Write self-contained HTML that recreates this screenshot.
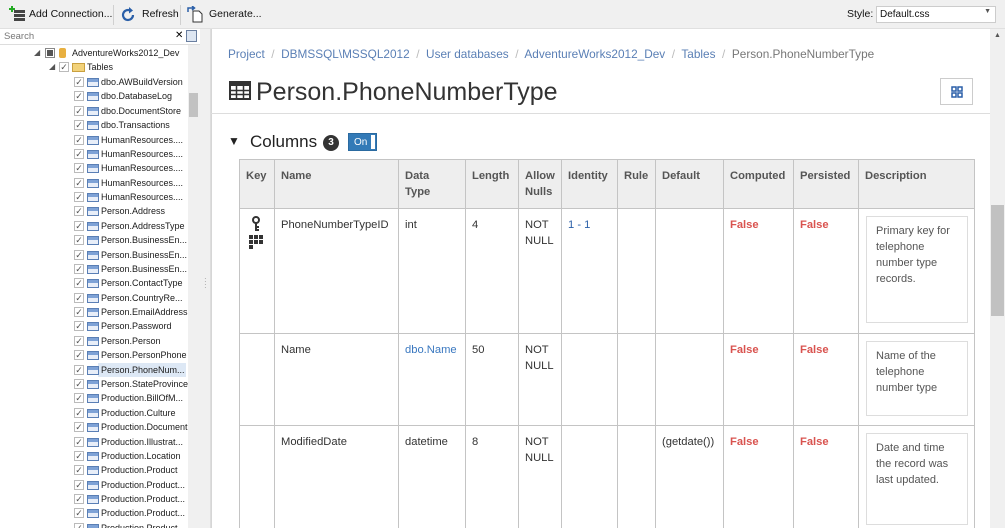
<!DOCTYPE html>
<html><head><meta charset="utf-8"><style>
*{box-sizing:border-box;margin:0;padding:0}
html,body{width:1005px;height:528px;overflow:hidden}
#w{width:1005px;height:528px;overflow:hidden;background:#f0f0f0;font-family:"Liberation Sans",sans-serif;position:relative}
.tb{position:absolute;left:0;top:0;width:1005px;height:29px;background:#f0f0f0;border-bottom:1px solid #e0e0e0;font-size:10.5px;color:#111}
.tb span{position:absolute;top:8px}
.sep{position:absolute;top:5px;width:1px;height:20px;background:#d0d0d0}
.side{position:absolute;left:0;top:29px;width:200px;height:499px;background:#fff;border-right:1px solid #ccc}
.search{position:absolute;left:0;top:29px;width:200px;height:16px;background:#fff;border-bottom:1px solid #ddd;font-size:9.5px;color:#777;padding:2px 4px}
.item{position:absolute;font-size:9px;color:#1a1a1a;height:14px;line-height:14px;white-space:nowrap}
.cb{position:absolute;width:10px;height:10px;border:1px solid #bbb;background:#fff;font-size:9px;line-height:8px;text-align:center;color:#555}
.ti{position:absolute;width:12px;height:9px;border:1px solid #5a7fb5;background:linear-gradient(#7ea2d6 0 3px,#e8eef8 3px);}
.content{position:absolute;left:211px;top:29px;width:779px;height:499px;background:#fff;border-left:1px solid #d6d6d6}
.vs{position:absolute;left:990px;top:29px;width:15px;height:499px;background:#f0f0f0}
table{position:absolute;left:239px;top:159px;border-collapse:collapse;table-layout:fixed;font-size:11.2px;color:#333}
td,th{border:1px solid #c4c4c4;vertical-align:top;text-align:left;padding:8px 6px;line-height:16px}
th{background:#eee;font-weight:bold;color:#555;padding-top:8px}
.f{color:#d9534f;font-weight:bold}
.ta{border:1px solid #ddd;width:102px;padding:6px 9px;color:#555;font-size:11px;line-height:16px;position:relative;margin-left:1px}
</style></head><body><div id="w">
<div class="tb">
<svg style="position:absolute;left:9px;top:6px" width="17" height="17"><rect x="5" y="4" width="11" height="3" fill="#444"/><rect x="5" y="8" width="11" height="3" fill="#444"/><rect x="5" y="12" width="11" height="3" fill="#444"/><path d="M3 0v6M0 3h6" stroke="#2a2" stroke-width="2"/></svg>
<span style="left:29px">Add Connection...</span>
<div class="sep" style="left:113px"></div>
<svg style="position:absolute;left:121px;top:7px" width="15" height="15"><path d="M12 8a5 5 0 1 1-3-4.6" fill="none" stroke="#2a5fa8" stroke-width="2.2"/><path d="M8 0l4 3.5-4 3z" fill="#2a5fa8"/></svg>
<span style="left:142px">Refresh</span>
<div class="sep" style="left:180px"></div>
<svg style="position:absolute;left:187px;top:6px" width="16" height="17"><path d="M6 5h6l3 3v8H6z" fill="#fff" stroke="#333"/><path d="M1 6V2h6M5 0l2.5 2L5 4" fill="none" stroke="#2a5fa8" stroke-width="1.5"/></svg>
<span style="left:209px">Generate...</span>
<span style="left:847px">Style:</span>
<div style="position:absolute;left:876px;top:6px;width:120px;height:17px;background:#fff;border:1px solid #ccc;font-size:10px;padding:2px 3px">Default.css<span style="position:absolute;right:4px;top:1px;font-size:7px;color:#555">▼</span></div>
</div>
<div class="side"></div>
<div class="search">Search<span style="position:absolute;left:175px;color:#000;font-size:10px;top:1px">✕</span><span style="position:absolute;left:186px;top:1px;width:11px;height:12px;border:1px solid #6a7fa0;background:#dde6f2"></span></div>
<div style="position:absolute;left:188px;top:45px;width:12px;height:483px;background:#f0f0f0"></div>
<div style="position:absolute;left:189px;top:93px;width:9px;height:24px;background:#c2c2c2"></div>
<div style="position:absolute;left:200px;top:29px;width:11px;height:499px;background:#f0f0f0;border-right:1px solid #ddd"></div>
<div style="position:absolute;left:204px;top:277px;color:#999;font-size:8px;line-height:3px">·<br>·<br>·<br>·</div>
<div class="item" style="left:34px;top:46px;font-size:8px;color:#555">◢</div>
<div class="cb" style="left:45px;top:48px;border-color:#888"><div style="width:6px;height:6px;background:#555;margin:1px"></div></div>
<div style="position:absolute;left:59px;top:48px;width:7px;height:10px;background:#e8b040;border-radius:2px"></div>
<div class="item" style="left:72px;top:46px">AdventureWorks2012_Dev</div>
<div class="item" style="left:49px;top:60px;font-size:8px;color:#555">◢</div>
<div class="cb" style="left:59px;top:62px">✓</div>
<div style="position:absolute;left:72px;top:63px;width:13px;height:9px;background:#f2d27a;border:1px solid #c9a040"></div>
<div class="item" style="left:87px;top:60px">Tables</div>
<div style="position:absolute;left:98px;top:363px;width:88px;height:14px;background:#dde8f5"></div>
<div id="tree"></div>
<script>
var n=["dbo.AWBuildVersion","dbo.DatabaseLog","dbo.DocumentStore","dbo.Transactions","HumanResources....","HumanResources....","HumanResources....","HumanResources....","HumanResources....","Person.Address","Person.AddressType","Person.BusinessEn...","Person.BusinessEn...","Person.BusinessEn...","Person.ContactType","Person.CountryRe...","Person.EmailAddress","Person.Password","Person.Person","Person.PersonPhone","Person.PhoneNum...","Person.StateProvince","Production.BillOfM...","Production.Culture","Production.Document","Production.Illustrat...","Production.Location","Production.Product","Production.Product...","Production.Product...","Production.Product...","Production.Product..."];
var h="";for(var i=0;i<n.length;i++){var y=75+i*14.38;h+='<div class="cb" style="left:74px;top:'+(y+2)+'px">✓</div><div class="ti" style="left:87px;top:'+(y+3)+'px"></div><div class="item" style="left:101px;top:'+y+'px">'+n[i]+'</div>';}
document.getElementById("tree").innerHTML=h;
</script>
<div class="content"></div>
<div class="vs"><div style="position:absolute;left:4px;top:3px;font-size:7px;color:#555">▲</div><div style="position:absolute;left:1px;top:176px;width:13px;height:111px;background:#c1c1c1"></div></div>
<div style="position:absolute;left:211px;top:113px;width:779px;height:1px;background:#ddd"></div>
<div style="position:absolute;left:228px;top:47px;font-size:11.8px;color:#5a7fb5;white-space:nowrap">Project <span style="color:#bbb">&nbsp;/&nbsp;</span> DBMSSQL\MSSQL2012 <span style="color:#bbb">&nbsp;/&nbsp;</span> User databases <span style="color:#bbb">&nbsp;/&nbsp;</span> AdventureWorks2012_Dev <span style="color:#bbb">&nbsp;/&nbsp;</span> Tables <span style="color:#bbb">&nbsp;/&nbsp;</span> <span style="color:#777">Person.PhoneNumberType</span></div>
<svg style="position:absolute;left:229px;top:81px" width="22" height="19"><rect x="1" y="1" width="20" height="17" fill="none" stroke="#333" stroke-width="2"/><rect x="1" y="1" width="20" height="4" fill="#333"/><path d="M7.5 5v13M14.5 5v13M1 9.5h20M1 13.5h20" stroke="#333" stroke-width="1.5"/></svg>
<div style="position:absolute;left:256px;top:78px;font-size:25px;color:#333">Person.PhoneNumberType</div>
<div style="position:absolute;left:940px;top:78px;width:33px;height:27px;border:1px solid #ccc;background:#fff"><svg style="position:absolute;left:10px;top:7px" width="12" height="12"><rect x="1" y="1" width="4" height="4" fill="none" stroke="#2a5fa8" stroke-width="1.5"/><rect x="7" y="1" width="4" height="4" fill="none" stroke="#2a5fa8" stroke-width="1.5"/><rect x="1" y="7" width="4" height="4" fill="none" stroke="#2a5fa8" stroke-width="1.5"/><rect x="7" y="7" width="4" height="4" fill="none" stroke="#2a5fa8" stroke-width="1.5"/></svg></div>
<div style="position:absolute;left:228px;top:134px;font-size:12px;color:#222">▼</div>
<div style="position:absolute;left:250px;top:132px;font-size:17px;color:#222">Columns</div>
<div style="position:absolute;left:323px;top:135px;width:16px;height:16px;border-radius:8px;background:#333;color:#fff;font-size:10px;text-align:center;line-height:16px;font-weight:bold">3</div>
<div style="position:absolute;left:348px;top:133px;width:29px;height:18px;background:#337ab7;border:1px solid #2a6aa0;color:#fff;font-size:10px;padding:3px 0 0 5px">On<span style="position:absolute;right:1px;top:1px;width:4px;height:14px;background:#fff"></span></div>
<table>
<colgroup><col style="width:35px"><col style="width:124px"><col style="width:67px"><col style="width:53px"><col style="width:43px"><col style="width:56px"><col style="width:38px"><col style="width:68px"><col style="width:70px"><col style="width:65px"><col style="width:115px"></colgroup>
<tr style="height:49px"><th>Key</th><th>Name</th><th>Data<br>Type</th><th>Length</th><th>Allow Nulls</th><th>Identity</th><th>Rule</th><th>Default</th><th>Computed</th><th>Persisted</th><th>Description</th></tr>
<tr style="height:125px"><td style="padding:7px 0 0 8px"><svg width="16" height="36"><circle cx="8" cy="4" r="3" fill="none" stroke="#333" stroke-width="2"/><path d="M8 7v8M8 11h3M8 14h3" stroke="#333" stroke-width="2"/><g fill="#333"><rect x="1" y="19" width="4" height="4"/><rect x="6" y="19" width="4" height="4"/><rect x="11" y="19" width="4" height="4"/><rect x="1" y="24" width="4" height="4"/><rect x="6" y="24" width="4" height="4"/><rect x="11" y="24" width="4" height="4"/><rect x="1" y="29" width="4" height="4"/></g></svg></td><td>PhoneNumberTypeID</td><td>int</td><td>4</td><td>NOT NULL</td><td style="color:#2a5fa8">1 - 1</td><td></td><td></td><td class="f">False</td><td class="f">False</td><td style="padding:7px 6px"><div class="ta" style="height:107px">Primary key for telephone number type records.</div></td></tr>
<tr style="height:92px"><td></td><td>Name</td><td style="color:#3a78c0">dbo.Name</td><td>50</td><td>NOT NULL</td><td></td><td></td><td></td><td class="f">False</td><td class="f">False</td><td style="padding:7px 6px"><div class="ta" style="height:75px">Name of the telephone number type</div></td></tr>
<tr style="height:110px"><td></td><td>ModifiedDate</td><td>datetime</td><td>8</td><td>NOT NULL</td><td></td><td></td><td>(getdate())</td><td class="f">False</td><td class="f">False</td><td style="padding:7px 6px"><div class="ta" style="height:92px">Date and time the record was last updated.</div></td></tr>
</table>
</div></body></html>
